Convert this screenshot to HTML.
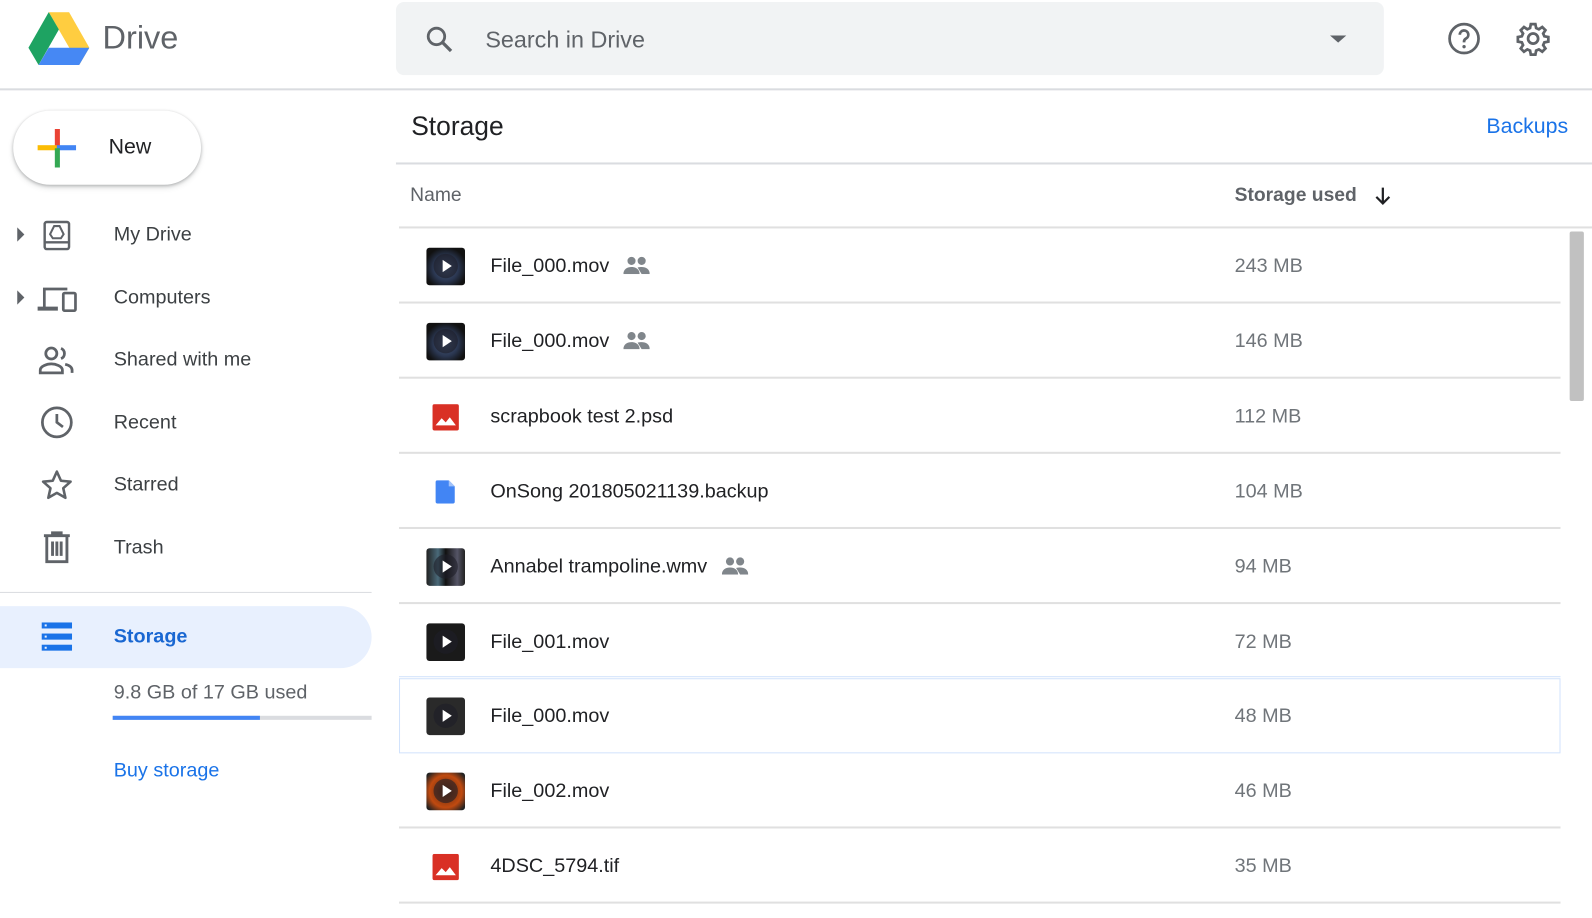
<!DOCTYPE html>
<html><head><meta charset="utf-8"><style>
*{box-sizing:border-box;margin:0;padding:0}
body{width:1592px;height:918px;overflow:hidden;background:#fff;font-family:"Liberation Sans",Arial,sans-serif;color:#3c4043;position:relative}
#w{position:absolute;left:0;top:0;width:1568px;height:904px;transform:scale(1.0153);transform-origin:0 0}
.abs{position:absolute}
.nav{position:absolute;left:112px;font-size:19.5px;color:#3c4043}
.ico{position:absolute}
.row{position:absolute;left:393px;width:1144px;height:74px;border-bottom:2px solid #e0e0e0}
.row .nm{position:absolute;left:90px;top:26px;font-size:19.5px;color:#202124}
.row .sz{position:absolute;left:823px;top:26px;font-size:19.5px;color:#70757a}
.thumb{position:absolute;left:27px;top:19px;width:38px;height:37px;border-radius:3px;background:radial-gradient(circle at 50% 55%,#4b5f80 0,#2a3650 45%,#111 75%)}
.thumb:after{content:"";position:absolute;left:16px;top:12px;border-left:9px solid #fff;border-top:6px solid transparent;border-bottom:6px solid transparent}
.thumb:before{content:"";position:absolute;left:7px;top:6px;width:24px;height:24px;border-radius:50%;background:rgba(30,30,40,.6)}
.people{display:inline-block;margin-left:14px;vertical-align:-2px}
</style></head><body><div id="w">
<svg class="ico" style="left:28px;top:12px" width="60" height="52" viewBox="0 0 60 52">
<polygon points="20,0 40,0 60,35 50,52" fill="#ffcd40"/>
<polygon points="20,0 30,17 10,52 0,35" fill="#1ea362"/>
<polygon points="20,35 60,35 50,52 10,52" fill="#4688f4"/>
</svg>
<div class="abs" style="left:101px;top:19px;font-size:32px;color:#5f6368">Drive</div>
<div class="abs" style="left:390px;top:2px;width:973px;height:72px;background:#f1f3f4;border-radius:8px"></div>
<svg class="ico" style="left:418px;top:24px" width="30" height="30" viewBox="0 0 24 24"><circle cx="9.5" cy="9.5" r="6.5" fill="none" stroke="#5f6368" stroke-width="2.2"/><path d="M14 14l7 7" stroke="#5f6368" stroke-width="2.6"/></svg>
<div class="abs" style="left:478px;top:26px;font-size:23px;color:#5f6368">Search in Drive</div>
<div class="abs" style="left:1310px;top:35px;border-top:7px solid #5f6368;border-left:8px solid transparent;border-right:8px solid transparent"></div>
<svg class="ico" style="left:1424px;top:20px" width="36" height="36" viewBox="0 0 24 24"><circle cx="12" cy="12" r="9.5" fill="none" stroke="#5f6368" stroke-width="1.8"/><path d="M9.2 9.5a2.8 2.8 0 1 1 4 2.5c-.8.4-1.2 1-1.2 2v.5" fill="none" stroke="#5f6368" stroke-width="1.8"/><circle cx="12" cy="17.3" r="1.1" fill="#5f6368"/></svg>
<svg class="ico" style="left:1492px;top:20px" width="36" height="36" viewBox="0 0 24 24"><path fill="none" stroke="#5f6368" stroke-width="1.8" d="M10.5 2.5h3l.5 2.6 1.8.8 2.2-1.5 2.1 2.1-1.5 2.2.8 1.8 2.6.5v3l-2.6.5-.8 1.8 1.5 2.2-2.1 2.1-2.2-1.5-1.8.8-.5 2.6h-3l-.5-2.6-1.8-.8-2.2 1.5-2.1-2.1 1.5-2.2-.8-1.8-2.6-.5v-3l2.6-.5.8-1.8-1.5-2.2 2.1-2.1 2.2 1.5 1.8-.8z"/><circle cx="12" cy="12" r="3.3" fill="none" stroke="#5f6368" stroke-width="1.8"/></svg>
<div class="abs" style="left:0;top:87px;width:1568px;height:2px;background:#dadce0"></div>

<div class="abs" style="left:13px;top:109px;width:185px;height:73px;border-radius:37px;background:#fff;box-shadow:0 1px 3px rgba(60,64,67,.35),0 3px 6px rgba(60,64,67,.15)"></div>
<svg class="ico" style="left:37px;top:127px" width="38" height="38" viewBox="0 0 38 38"><rect x="17" y="0" width="5" height="19" fill="#ea4335"/><rect x="0" y="16" width="19" height="5" fill="#fbbc04"/><rect x="19" y="16" width="19" height="5" fill="#4285f4"/><rect x="17" y="19" width="5" height="19" fill="#34a853"/></svg>
<div class="abs" style="left:107px;top:133px;font-size:21px;color:#202124">New</div>

<div class="abs" style="left:17px;top:224px;border-left:7px solid #5f6368;border-top:7px solid transparent;border-bottom:7px solid transparent"></div>
<div class="abs" style="left:17px;top:286px;border-left:7px solid #5f6368;border-top:7px solid transparent;border-bottom:7px solid transparent"></div>
<svg class="ico" style="left:40px;top:216px" width="32" height="32" viewBox="0 0 24 24"><rect x="3" y="2" width="18" height="20" rx="1.5" fill="none" stroke="#5f6368" stroke-width="1.8"/><path d="M3 17h18" stroke="#5f6368" stroke-width="1.8"/><path d="M10 5h4l3 6-2 3H9l-2-3z" fill="none" stroke="#5f6368" stroke-width="1.5"/></svg>
<div class="nav" style="top:220px">My Drive</div>
<svg class="ico" style="left:37px;top:278px" width="40" height="32" viewBox="0 0 30 24"><path d="M4 4h18v2H6v12H4z M0 18h15v3H0z" fill="#5f6368"/><rect x="19" y="8" width="9" height="13" rx="1" fill="none" stroke="#5f6368" stroke-width="2"/></svg>
<div class="nav" style="top:282px">Computers</div>
<svg class="ico" style="left:38px;top:340px" width="36" height="30" viewBox="0 0 26 22"><circle cx="9" cy="6" r="4" fill="none" stroke="#5f6368" stroke-width="2"/><path d="M1 20v-2c0-3 5-4.5 8-4.5s8 1.5 8 4.5v2z" fill="none" stroke="#5f6368" stroke-width="2"/><path d="M16 2.3a4 4 0 0 1 0 7.4M19 13.8c2.5.6 5 1.8 5 4.2v2" fill="none" stroke="#5f6368" stroke-width="2"/></svg>
<div class="nav" style="top:343px">Shared with me</div>
<svg class="ico" style="left:38px;top:398px" width="36" height="36" viewBox="0 0 24 24"><circle cx="12" cy="12" r="9.5" fill="none" stroke="#5f6368" stroke-width="1.8"/><path d="M12 6.5V12l4 3" fill="none" stroke="#5f6368" stroke-width="1.8"/></svg>
<div class="nav" style="top:405px">Recent</div>
<svg class="ico" style="left:38px;top:460px" width="36" height="36" viewBox="0 0 24 24"><path d="M12 3l2.7 6 6.3.6-4.8 4.3 1.4 6.3L12 17l-5.6 3.2 1.4-6.3L3 9.6 9.3 9z" fill="none" stroke="#5f6368" stroke-width="1.7" stroke-linejoin="round"/></svg>
<div class="nav" style="top:466px">Starred</div>
<svg class="ico" style="left:40px;top:522px" width="32" height="34" viewBox="0 0 22 24"><path d="M2 4h18M8 4V2h6v2M4 4v18h14V4M8 8v10M11 8v10M14 8v10" fill="none" stroke="#5f6368" stroke-width="2"/></svg>
<div class="nav" style="top:528px">Trash</div>
<div class="abs" style="left:0;top:583px;width:366px;height:1px;background:#dadce0"></div>
<div class="abs" style="left:0;top:597px;width:366px;height:61px;background:#e8f0fe;border-radius:0 31px 31px 0"></div>
<svg class="ico" style="left:41px;top:613px" width="30" height="28" viewBox="0 0 30 28"><g fill="#1a73e8"><rect x="0" y="0" width="30" height="6"/><rect x="0" y="11" width="30" height="6"/><rect x="0" y="22" width="30" height="6"/></g><g fill="#e8f0fe"><rect x="3" y="2" width="2" height="2"/><rect x="3" y="13" width="2" height="2"/><rect x="3" y="24" width="2" height="2"/></g></svg>
<div class="nav" style="top:616px;color:#1967d2;font-weight:bold">Storage</div>
<div class="nav" style="top:671px;color:#5f6368">9.8 GB of 17 GB used</div>
<div class="abs" style="left:111px;top:705px;width:255px;height:4px;background:#dadce0"></div>
<div class="abs" style="left:111px;top:705px;width:145px;height:4px;background:#4285f4"></div>
<div class="nav" style="top:748px;color:#1a73e8">Buy storage</div>

<div class="abs" style="left:405px;top:109px;font-size:26px;color:#202124">Storage</div>
<div class="abs" style="left:1464px;top:113px;font-size:21px;color:#1a73e8">Backups</div>
<div class="abs" style="left:390px;top:160px;width:1178px;height:2px;background:#dadce0"></div>
<div class="abs" style="left:404px;top:182px;font-size:19px;color:#5f6368">Name</div>
<div class="abs" style="left:1216px;top:182px;font-size:19px;color:#5f6368;font-weight:bold">Storage used</div>
<svg class="ico" style="left:1351px;top:182px" width="22" height="22" viewBox="0 0 24 24"><path d="M12 3v17M5 13l7 7 7-7" fill="none" stroke="#202124" stroke-width="2.4"/></svg>
<div class="abs" style="left:393px;top:223px;width:1175px;height:2px;background:#e0e0e0"></div>
<div class="abs" style="left:1546px;top:228px;width:14px;height:167px;background:#c1c1c1;border-radius:2px"></div>

<div class="row" style="top:225px"><div class="thumb"></div><div class="nm">File_000.mov<svg class="people" width="26" height="18" viewBox="0 0 26 18"><circle cx="8" cy="5" r="4" fill="#80868b"/><circle cx="18" cy="5" r="4" fill="#80868b"/><path d="M0 18c0-5 4-7 8-7s8 2 8 7zM14 11.5c1.3-.4 2.7-.5 4-.5 4 0 8 2 8 7h-8" fill="#80868b"/></svg></div><div class="sz">243 MB</div></div>
<div class="row" style="top:299px"><div class="thumb"></div><div class="nm">File_000.mov<svg class="people" width="26" height="18" viewBox="0 0 26 18"><circle cx="8" cy="5" r="4" fill="#80868b"/><circle cx="18" cy="5" r="4" fill="#80868b"/><path d="M0 18c0-5 4-7 8-7s8 2 8 7zM14 11.5c1.3-.4 2.7-.5 4-.5 4 0 8 2 8 7h-8" fill="#80868b"/></svg></div><div class="sz">146 MB</div></div>
<div class="row" style="top:373px"><svg class="ico" style="left:33px;top:25px" width="26" height="26" viewBox="0 0 26 26"><rect width="26" height="26" rx="2" fill="#d93025"/><path d="M3 21l6-7 4 4 4-5 6 8z" fill="#fff"/></svg><div class="nm">scrapbook test 2.psd</div><div class="sz">112 MB</div></div>
<div class="row" style="top:447px"><svg class="ico" style="left:36px;top:26px" width="19" height="23" viewBox="0 0 19 23"><path d="M2 0h11l6 6v15a2 2 0 0 1-2 2H2a2 2 0 0 1-2-2V2a2 2 0 0 1 2-2z" fill="#4285f4"/><path d="M13 0v6h6z" fill="#a1c2fa"/></svg><div class="nm">OnSong 201805021139.backup</div><div class="sz">104 MB</div></div>
<div class="row" style="top:521px"><div class="thumb" style="background:linear-gradient(90deg,#222,#4a6a7a 30%,#111 50%,#556 80%,#222)"></div><div class="nm">Annabel trampoline.wmv<svg class="people" width="26" height="18" viewBox="0 0 26 18"><circle cx="8" cy="5" r="4" fill="#80868b"/><circle cx="18" cy="5" r="4" fill="#80868b"/><path d="M0 18c0-5 4-7 8-7s8 2 8 7zM14 11.5c1.3-.4 2.7-.5 4-.5 4 0 8 2 8 7h-8" fill="#80868b"/></svg></div><div class="sz">94 MB</div></div>
<div class="row" style="top:595px;height:72px;border-bottom:1px solid #d2e3fc"><div class="thumb" style="background:#1a1a1a"></div><div class="nm">File_001.mov</div><div class="sz">72 MB</div></div>
<div class="row" style="top:668px;border:1px solid #d2e3fc;height:74px"><div class="thumb" style="left:26px;top:18px;background:#2a2a2a"></div><div class="nm" style="left:89px;top:25px">File_000.mov</div><div class="sz" style="left:822px;top:25px">48 MB</div></div>
<div class="row" style="top:742px"><div class="thumb" style="background:radial-gradient(circle,#5a2a10 0,#c04a10 60%,#222 90%)"></div><div class="nm">File_002.mov</div><div class="sz">46 MB</div></div>
<div class="row" style="top:816px"><svg class="ico" style="left:33px;top:25px" width="26" height="26" viewBox="0 0 26 26"><rect width="26" height="26" rx="2" fill="#d93025"/><path d="M3 21l6-7 4 4 4-5 6 8z" fill="#fff"/></svg><div class="nm">4DSC_5794.tif</div><div class="sz">35 MB</div></div>
</div></body></html>
